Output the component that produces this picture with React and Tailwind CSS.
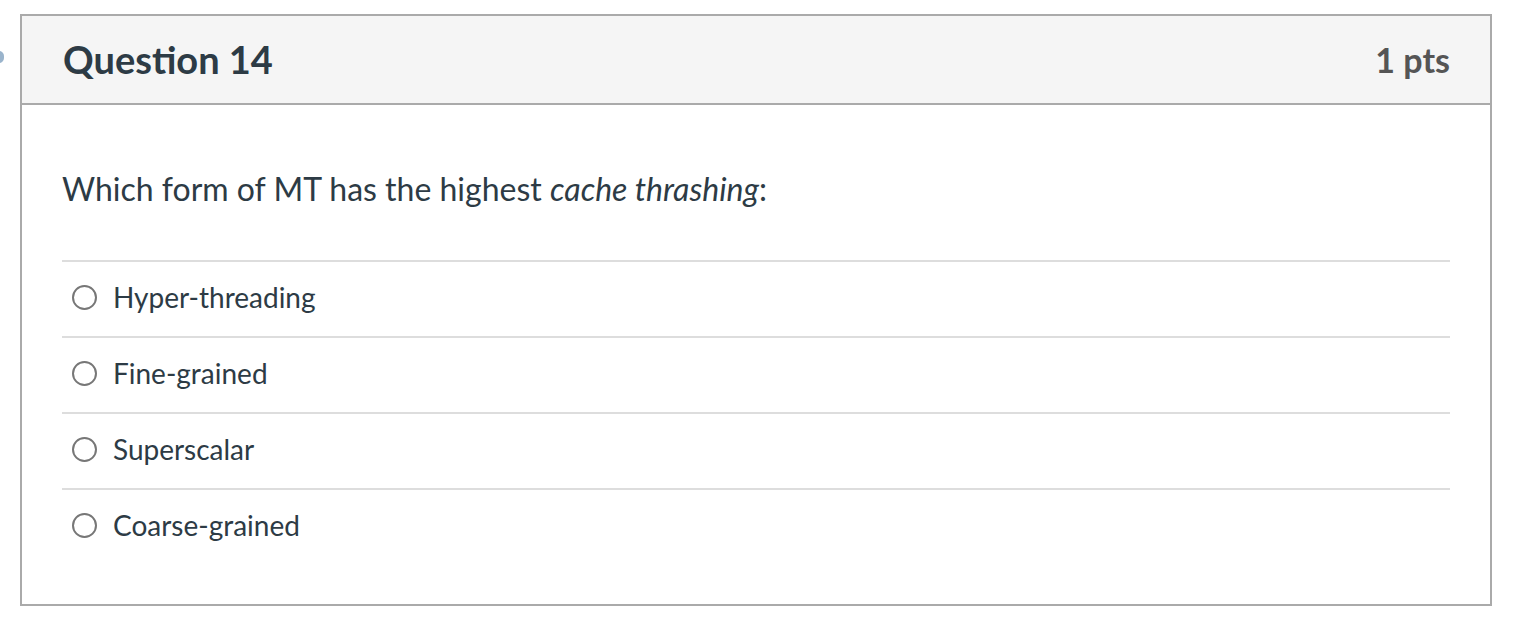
export default function App() {
  const options = ['Hyper-threading', 'Fine-grained', 'Superscalar', 'Coarse-grained']
  return (
    <div className="relative h-[624px] w-[1526px] bg-white pl-5 pt-[14px] font-['Lato',sans-serif] text-[#2d3b45]">
      <div className="absolute left-[-6px] top-[51px] h-[12px] w-[10px] rounded-full bg-[#9ab4cc]" />
      <div className="w-[1472px] border-2 border-[#aaaaaa]">
        <div className="flex h-[89px] items-center justify-between border-b-2 border-[#aaaaaa] bg-[#f5f5f5] pl-[41px] pr-[40px]">
          <h2 className="text-[38px] font-bold">Question 14</h2>
          <span className="text-[34px] font-bold text-[#555555]">1 pts</span>
        </div>
        <div className="px-[40px] pb-[40px] pt-[64px]">
          <p className="text-[32px] leading-[40px]">
            Which form of MT has the highest <em>cache thrashing</em>:
          </p>
          <div className="mt-[51px]">
            {options.map((o) => (
              <div key={o} className="flex h-[76px] items-center border-t-2 border-[#dddddd] pl-[10px] pb-[4px]">
                <span className="h-[25px] w-[25px] rounded-full border-2 border-[#777777]" />
                <span className="ml-[16px] text-[28px]">{o}</span>
              </div>
            ))}
          </div>
        </div>
      </div>
    </div>
  )
}
